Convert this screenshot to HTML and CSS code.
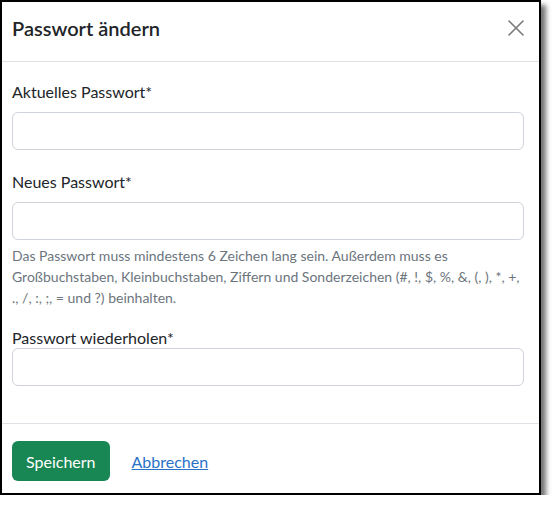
FILE: index.html
```html
<!DOCTYPE html>
<html lang="de">
<head>
<meta charset="utf-8">
<title>Passwort ändern</title>
<link rel="stylesheet" href="styles.css">
</head>
<body>
<div class="modal">
  <div class="modal-header">
    <h5 class="modal-title">Passwort ändern</h5>
    <button class="btn-close" type="button" aria-label="Schließen">
      <svg viewBox="0 0 16 16" width="16" height="16" aria-hidden="true">
        <path d="M1 1 L15 15 M15 1 L1 15" stroke="#7a7a7a" stroke-width="1.6" fill="none" stroke-linecap="round"/>
      </svg>
    </button>
  </div>
  <div class="modal-body">
    <div class="field field-1">
      <label class="form-label" for="cur">Aktuelles Passwort*</label>
      <input class="form-control" id="cur" type="password">
    </div>
    <div class="field field-2">
      <label class="form-label" for="new">Neues Passwort*</label>
      <input class="form-control" id="new" type="password">
      <div class="form-text">Das Passwort muss mindestens 6 Zeichen lang sein. Außerdem muss es<br>Großbuchstaben, Kleinbuchstaben, Ziffern und Sonderzeichen (#, !, $, %, &amp;, (, ), *, +,<br>., /, :, ;, = und ?) beinhalten.</div>
    </div>
    <div class="field field-3">
      <label class="form-label tight" for="rep">Passwort wiederholen*</label>
      <input class="form-control" id="rep" type="password">
    </div>
  </div>
  <div class="modal-footer">
    <button class="btn-save" type="button">Speichern</button>
    <a class="btn-cancel" href="#">Abbrechen</a>
  </div>
</div>
</body>
</html>
```

FILE: styles.css
```css
* { box-sizing: border-box; }

html, body {
  margin: 0;
  padding: 0;
  background: #ffffff;
}

body {
  font-family: Lato, "Liberation Sans", sans-serif;
  color: #212529;
}

.modal {
  width: 541px;
  height: 495px;
  border: 2px solid #000;
  background: #fff;
  box-shadow: 5px 5px 5px rgba(0, 0, 0, 0.55);
  display: flex;
  flex-direction: column;
}

.modal-header {
  display: flex;
  align-items: center;
  justify-content: space-between;
  padding: 11px 15px 18px 10px;
  border-bottom: 1px solid #dee2e6;
}

.modal-title {
  margin: 0;
  font-size: 20px;
  line-height: 30px;
  font-weight: 600;
  color: #212529;
}

.btn-close {
  width: 17px;
  height: 17px;
  padding: 0;
  margin: 0;
  border: 0;
  background: transparent;
  display: flex;
  align-items: center;
  justify-content: center;
}

.modal-body {
  padding: 18px 15px 37px 10px;
  flex: 1;
}

.field { display: flex; flex-direction: column; }
.field-1 { margin-bottom: 20px; }
.field-2 { margin-bottom: 18px; }

.form-label {
  font-size: 16px;
  line-height: 24px;
  margin-bottom: 8px;
  color: #212529;
}

.form-label.tight { margin-bottom: -2px; }

.form-control {
  display: block;
  width: 512px;
  height: 38px;
  border: 1px solid #ced4da;
  border-radius: 6px;
  background: #fff;
  font: inherit;
  padding: 6px 12px;
  margin: 0;
}

.form-text {
  margin-top: 5px;
  font-size: 14px;
  line-height: 21px;
  color: #6c757d;
}

.form-text-wide { letter-spacing: 0; }

.modal-footer {
  display: flex;
  align-items: center;
  border-top: 1px solid #dee2e6;
  padding: 17px 15px 12px 10px;
}

.btn-save {
  height: 40px;
  padding: 0 14px;
  border: 0;
  border-radius: 6px;
  background: #198754;
  color: #fff;
  font-family: inherit;
  font-size: 16px;
}

.btn-cancel {
  margin-left: 22px;
  font-size: 16px;
  color: #2a72c8;
  text-decoration: underline;
}
```
